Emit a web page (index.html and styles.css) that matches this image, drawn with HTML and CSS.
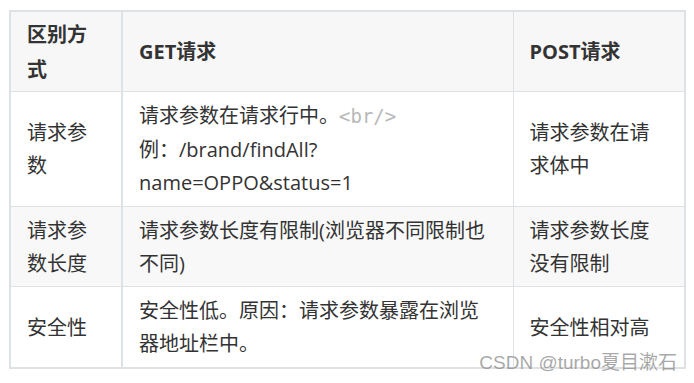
FILE: index.html
```html
<!DOCTYPE html>
<html lang="zh-CN">
<head>
<meta charset="utf-8">
<link rel="stylesheet" href="styles.css">
</head>
<body>
<div class="wrap">
<table class="cmp">
  <colgroup><col class="c1"><col class="c2"><col class="c3"></colgroup>
  <thead>
    <tr><th>区别方式</th><th>GET请求</th><th>POST请求</th></tr>
  </thead>
  <tbody>
    <tr>
      <td>请求参数</td>
      <td>请求参数在请求行中。<code>&lt;br/&gt;</code> 例：/brand/findAll?<wbr>name=OPPO&amp;status=1</td>
      <td>请求参数在请求体中</td>
    </tr>
    <tr class="even">
      <td>请求参数长度</td>
      <td>请求参数长度有限制(浏览器不同限制也不同)</td>
      <td>请求参数长度没有限制</td>
    </tr>
    <tr>
      <td>安全性</td>
      <td>安全性低。原因：请求参数暴露在浏览器地址栏中。</td>
      <td>安全性相对高</td>
    </tr>
  </tbody>
</table>
<div class="mark">CSDN @turbo夏目漱石</div>
</div>
</body>
</html>
```
FILE: styles.css
```css
html, body { margin: 0; padding: 0; background: #fff; }
.wrap { position: relative; width: 694px; height: 383px; padding: 10px 0 0 9px; box-sizing: border-box; }
.cmp {
  border-collapse: collapse;
  width: 675px;
  table-layout: fixed;
  font-family: "Open Sans", "Noto Sans CJK SC", sans-serif;
  font-size: 20px;
  line-height: 33px;
  color: #333;
  border: 2px solid #dfe2e5;
}
.c1 { width: 112px; }
.c2 { width: 391px; }
.c3 { width: 172px; }
.cmp th, .cmp td {
  border: 1px solid #dfe2e5;
  padding: 7px 16px 6.5px;
  text-align: left;
  vertical-align: middle;
  word-break: normal;
}
.cmp th { font-weight: 700; background: #f7f7f7; }
.cmp th:first-child { padding-top: 4.5px; padding-bottom: 4.5px; line-height: 35px; }
.cmp tr.even td { background: #f8f8f8; }
.cmp td:first-child { border-right-width: 2px; }
.cmp th:first-child { border-right-width: 2px; }
.cmp code {
  font-family: "DejaVu Sans Mono", monospace;
  font-size: 19px;
  color: #b8b8b8;
}
.mark {
  position: absolute;
  right: 17px;
  top: 351px;
  font-family: "Liberation Sans", "Noto Sans CJK SC", sans-serif;
  font-size: 19px;
  line-height: 24px;
  color: rgba(140, 140, 140, 0.75);
}
```
